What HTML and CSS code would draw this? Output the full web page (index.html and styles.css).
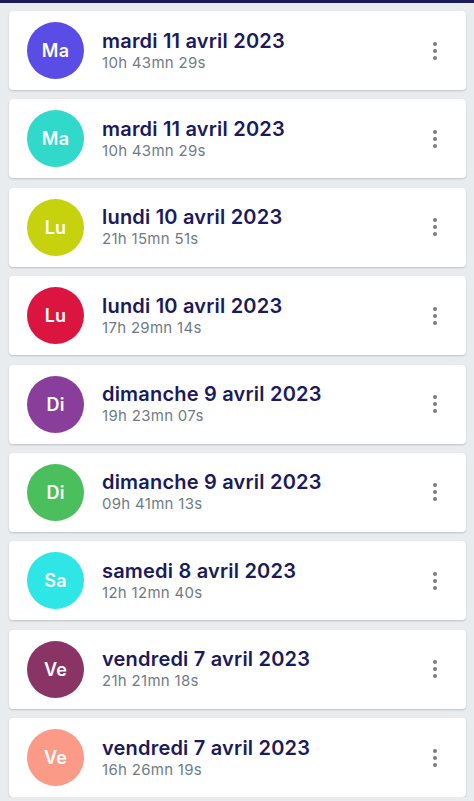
FILE: index.html
```html
<!DOCTYPE html>
<html lang="fr">
<head>
    <meta charset="UTF-8">
    <meta name="viewport" content="width=device-width, initial-scale=1.0">
    <title>Historique</title>
    <link rel="stylesheet" href="styles.css">
</head>
<body>
    <div class="topbar"></div>
    <div class="list">
        <div class="item">
            <div class="avatar" style="background-color: #5a4de6">Ma</div>
            <div class="info">
                <div class="date">mardi 11 avril 2023</div>
                <div class="time">10h 43mn 29s</div>
            </div>
            <div class="more"><span></span><span></span><span></span></div>
        </div>
        <div class="item">
            <div class="avatar" style="background-color: #30d9c9">Ma</div>
            <div class="info">
                <div class="date">mardi 11 avril 2023</div>
                <div class="time">10h 43mn 29s</div>
            </div>
            <div class="more"><span></span><span></span><span></span></div>
        </div>
        <div class="item">
            <div class="avatar" style="background-color: #c6d20e">Lu</div>
            <div class="info">
                <div class="date">lundi 10 avril 2023</div>
                <div class="time">21h 15mn 51s</div>
            </div>
            <div class="more"><span></span><span></span><span></span></div>
        </div>
        <div class="item">
            <div class="avatar" style="background-color: #dc1540">Lu</div>
            <div class="info">
                <div class="date">lundi 10 avril 2023</div>
                <div class="time">17h 29mn 14s</div>
            </div>
            <div class="more"><span></span><span></span><span></span></div>
        </div>
        <div class="item">
            <div class="avatar" style="background-color: #8a3e9c">Di</div>
            <div class="info">
                <div class="date">dimanche 9 avril 2023</div>
                <div class="time">19h 23mn 07s</div>
            </div>
            <div class="more"><span></span><span></span><span></span></div>
        </div>
        <div class="item">
            <div class="avatar" style="background-color: #4bbf5e">Di</div>
            <div class="info">
                <div class="date">dimanche 9 avril 2023</div>
                <div class="time">09h 41mn 13s</div>
            </div>
            <div class="more"><span></span><span></span><span></span></div>
        </div>
        <div class="item">
            <div class="avatar" style="background-color: #2ee6e5">Sa</div>
            <div class="info">
                <div class="date">samedi 8 avril 2023</div>
                <div class="time">12h 12mn 40s</div>
            </div>
            <div class="more"><span></span><span></span><span></span></div>
        </div>
        <div class="item">
            <div class="avatar" style="background-color: #8a3466">Ve</div>
            <div class="info">
                <div class="date">vendredi 7 avril 2023</div>
                <div class="time">21h 21mn 18s</div>
            </div>
            <div class="more"><span></span><span></span><span></span></div>
        </div>
        <div class="item">
            <div class="avatar" style="background-color: #fc9a88">Ve</div>
            <div class="info">
                <div class="date">vendredi 7 avril 2023</div>
                <div class="time">16h 26mn 19s</div>
            </div>
            <div class="more"><span></span><span></span><span></span></div>
        </div>
    </div>
</body>
</html>
```

FILE: styles.css
```css
* {
    box-sizing: border-box;
    margin: 0;
    padding: 0;
    font-family: Inter, "Noto Sans", sans-serif;
}

body {
    background-color: #e9ecee;
    overflow: hidden;
}

.topbar {
    height: 3px;
    background-color: #1b1a5c;
}

.list {
    display: flex;
    flex-direction: column;
    gap: 9.4px;
    padding: 8px 8px 0 9px;
}

.item {
    display: flex;
    align-items: center;
    height: 79px;
    padding: 0 0 0 18px;
    background-color: white;
    border-radius: 4px;
    box-shadow: 0 1px 2px rgba(0, 0, 0, 0.18);
}

.avatar {
    flex: none;
    width: 57px;
    height: 57px;
    border-radius: 50%;
    display: flex;
    justify-content: center;
    align-items: center;
    color: white;
    font-size: 18px;
    font-weight: 600;
    letter-spacing: 0.2px;
}

.info {
    flex: 1;
    margin-left: 18px;
}

.date {
    color: #1b1a5c;
    font-size: 20px;
    font-weight: 600;
    line-height: 24px;
    letter-spacing: 0.2px;
}

.time {
    color: #6f7c86;
    font-size: 15px;
    line-height: 20px;
    letter-spacing: 0.3px;
}

.more {
    display: flex;
    flex-direction: column;
    gap: 3px;
    width: 62px;
    align-items: center;
}

.more span {
    width: 4px;
    height: 4px;
    border-radius: 50%;
    background-color: #7d7d7d;
}
```
